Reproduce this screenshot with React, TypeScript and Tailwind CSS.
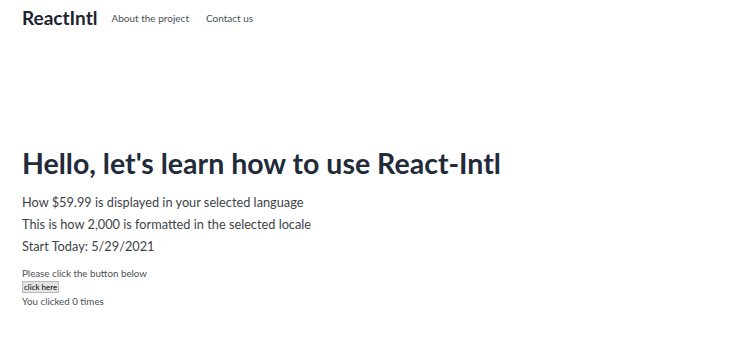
export default function App() {
  return (
    <div className="w-[730px] h-[350px] bg-white font-['Lato',sans-serif] text-[#343a40]">
      {/* Navbar */}
      <nav className="flex items-center h-[37px] px-[22px]">
        <span className="text-[19px] font-bold text-[#1c2430]">ReactIntl</span>
        <a className="ml-[14px] text-[10px] text-[#4a4f55]">About the project</a>
        <a className="ml-[17px] text-[10px] text-[#4a4f55]">Contact us</a>
      </nav>

      <main className="px-[22px] pt-[108px]">
        <h1 className="text-[28.5px] font-bold leading-[36px] text-[#212b3a]">
          Hello, let's learn how to use React-Intl
        </h1>
        <div className="mt-[10px] flex flex-col text-[12.75px] leading-[22px] text-[#3d4349]">
          <p>How $59.99 is displayed in your selected language</p>
          <p>This is how 2,000 is formatted in the selected locale</p>
          <p>Start Today: 5/29/2021</p>
        </div>
        <div className="mt-[9px] flex flex-col items-start text-[9.75px] leading-[14px] text-[#4a4f55]">
          <p>Please click the button below</p>
          <button className="my-[1px] bg-[#e4e4e4] border border-[#b9b9b9] text-[8px] leading-[10px] px-[1px] text-black">
            click here
          </button>
          <p>You clicked 0 times</p>
        </div>
      </main>
    </div>
  );
}
